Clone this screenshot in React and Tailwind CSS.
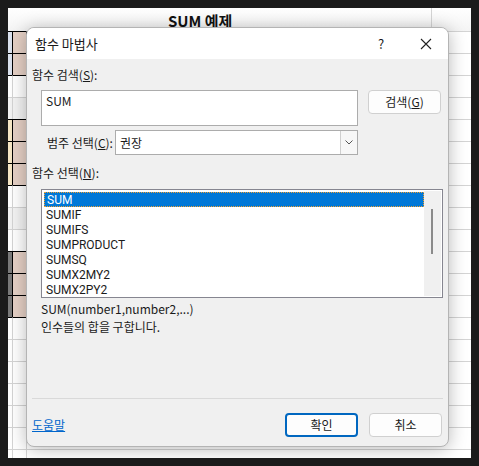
const ROWS = [
  { h: 23, title: true },
  { left: 'bg-[#dbe2ee]', mid: 'bg-[#e5d0c5]', box: true },
  { left: 'bg-[#dbe2ee]', mid: 'bg-[#e5d0c5]', box: true },
  { top: true },
  { left: 'bg-[#f3f3f3]', mid: 'bg-[#f3f3f3]' },
  { left: 'bg-[#f6e7c6]', mid: 'bg-[#e5d0c5]', box: true },
  { left: 'bg-[#f6e7c6]', mid: 'bg-[#e5d0c5]', box: true },
  { left: 'bg-[#f6e7c6]', mid: 'bg-[#e5d0c5]', box: true },
  { top: true },
  { left: 'bg-[#f3f3f3]', mid: 'bg-[#f3f3f3]' },
  {},
  { left: 'bg-[#7a7a7a]', mid: 'bg-[#e5d0c5]', box: true },
  { left: 'bg-[#7a7a7a]', mid: 'bg-[#e5d0c5]', box: true },
  { left: 'bg-[#7a7a7a]', mid: 'bg-[#e5d0c5]', box: true },
  { top: true },
  {},
  {},
  {},
  {},
  {},
  {},
]

const FUNCS = ['SUM', 'SUMIF', 'SUMIFS', 'SUMPRODUCT', 'SUMSQ', 'SUMX2MY2', 'SUMX2PY2']

function Sheet() {
  return (
    <div className="flex h-full flex-col overflow-hidden bg-white">
      {ROWS.map((r, i) =>
        r.title ? (
          <div key={i} className="relative h-[23px] shrink-0 bg-gradient-to-b from-white to-[#f4f4f4]">
            <div className="absolute left-[423px] top-0 h-full w-px bg-[#d4d4d4]" />
            <span className="absolute left-[160px] top-[2px] text-[15px] font-bold text-[#111]">SUM 예제</span>
          </div>
        ) : (
          <div key={i} className="flex h-[22px] shrink-0">
            <div className={`w-[4px] shrink-0 border-t ${r.box || r.top ? 'border-black' : 'border-[#d4d4d4]'} ${r.left || ''}`} />
            <div
              className={`w-[14px] shrink-0 border-l border-t ${r.box ? 'border-black' : 'border-[#d4d4d4]'} ${
                r.top ? 'border-t-black' : ''
              } ${r.mid || ''}`}
            />
            <div
              className={`flex-1 border-l border-t border-[#d4d4d4] ${r.box ? 'border-l-black' : ''} ${
                r.box || r.top ? 'border-t-[#d4d4d4]' : ''
              }`}
            />
          </div>
        )
      )}
    </div>
  )
}

function Btn({ children, primary }) {
  return (
    <button
      className={`flex h-[24px] w-[73px] items-center justify-center rounded-[4px] bg-[#fdfdfd] text-[12px] text-[#1a1a1a] ${
        primary ? 'border-2 border-[#0067c0]' : 'border border-[#d0d0d0]'
      }`}
    >
      {children}
    </button>
  )
}

export default function App() {
  return (
    <div
      className="h-[466px] w-[479px] bg-[#1b1b1b] p-[8px]"
      style={{ fontFamily: '"Noto Sans CJK KR", "Noto Sans", sans-serif' }}
    >
      <div className="relative h-[450px] w-[463px] overflow-hidden">
        <Sheet />
        <div className="absolute left-[18px] top-[19px] flex h-[420px] w-[423px] flex-col overflow-hidden rounded-[8px] border border-[#b4b4b4] bg-[#f0f0f0] shadow-[0_2px_18px_rgba(0,0,0,0.28)]">
          <div className="flex h-[31px] shrink-0 items-center bg-white pl-[8px] text-[13px] text-[#1a1a1a]">
            <span className="flex-1 leading-none">함수 마법사</span>
            <span className="w-[42px] text-[13px]">?</span>
            <svg width="12" height="12" viewBox="0 0 12 12" className="mr-[16px]">
              <path d="M1 1 L11 11 M11 1 L1 11" stroke="#222" strokeWidth="1.1" />
            </svg>
          </div>
          <div className="flex flex-1 flex-col px-[5px] text-[12px] leading-none text-[#1a1a1a]">
            <div className="mt-[10px]">
              함수 검색(<span className="underline">S</span>):
            </div>
            <div className="mt-[9px] flex items-start pl-[9px]">
              <div className="h-[36px] w-[317px] border border-[#acacac] bg-white pl-[4px] pt-[4px] text-[12px]">SUM</div>
              <div className="ml-[10px]">
                <Btn>
                  검색(<span className="underline">G</span>)
                </Btn>
              </div>
            </div>
            <div className="mt-[4px] flex items-center pl-[9px]">
              <span className="w-[74px] pl-[6px]">
                범주 선택(<span className="underline">C</span>):
              </span>
              <div className="flex h-[25px] w-[243px] items-center border border-[#acacac] bg-white">
                <span className="flex-1 pl-[4px]">권장</span>
                <div className="flex h-full w-[17px] items-center justify-center border-l border-[#cfcfcf] bg-[#f7f7f7]">
                  <svg width="8" height="5" viewBox="0 0 8 5">
                    <path d="M0.5 0.5 L4 4 L7.5 0.5" fill="none" stroke="#555" strokeWidth="1" />
                  </svg>
                </div>
              </div>
            </div>
            <div className="mt-[12px]">
              함수 선택(<span className="underline">N</span>):
            </div>
            <div className="ml-[9px] mt-[10px] flex h-[109px] w-[402px] border border-[#868690] bg-white p-px">
              <div className="flex-1 pl-px pt-px font-['Roboto',sans-serif]">
                {FUNCS.map((f, i) => (
                  <div
                    key={f}
                    className={`flex h-[15px] items-center pl-[2px] text-[12px] leading-[14px] ${
                      i === 0 ? 'border border-dotted border-[#f0a030] bg-[#0078d7] text-white' : ''
                    }`}
                  >
                    {f}
                  </div>
                ))}
              </div>
              <div className="relative w-[17px] bg-[#f0f0f0]">
                <div className="absolute left-[7px] top-[18px] h-[45px] w-[2px] bg-[#8a8a8a]" />
              </div>
            </div>
            <div className="ml-[9px] mt-[5px]">SUM(number1,number2,...)</div>
            <div className="ml-[9px] mt-[6px]">인수들의 합을 구합니다.</div>
            <div className="flex-1" />
            <div className="h-px w-[411px] bg-[#d9d9d9]" />
            <div className="mb-[9px] mt-[14px] flex items-center">
              <span className="flex-1 text-[12px] text-[#0066cc] underline">도움말</span>
              <Btn primary>확인</Btn>
              <div className="ml-[11px] mr-[1px]">
                <Btn>취소</Btn>
              </div>
            </div>
          </div>
        </div>
      </div>
    </div>
  )
}
